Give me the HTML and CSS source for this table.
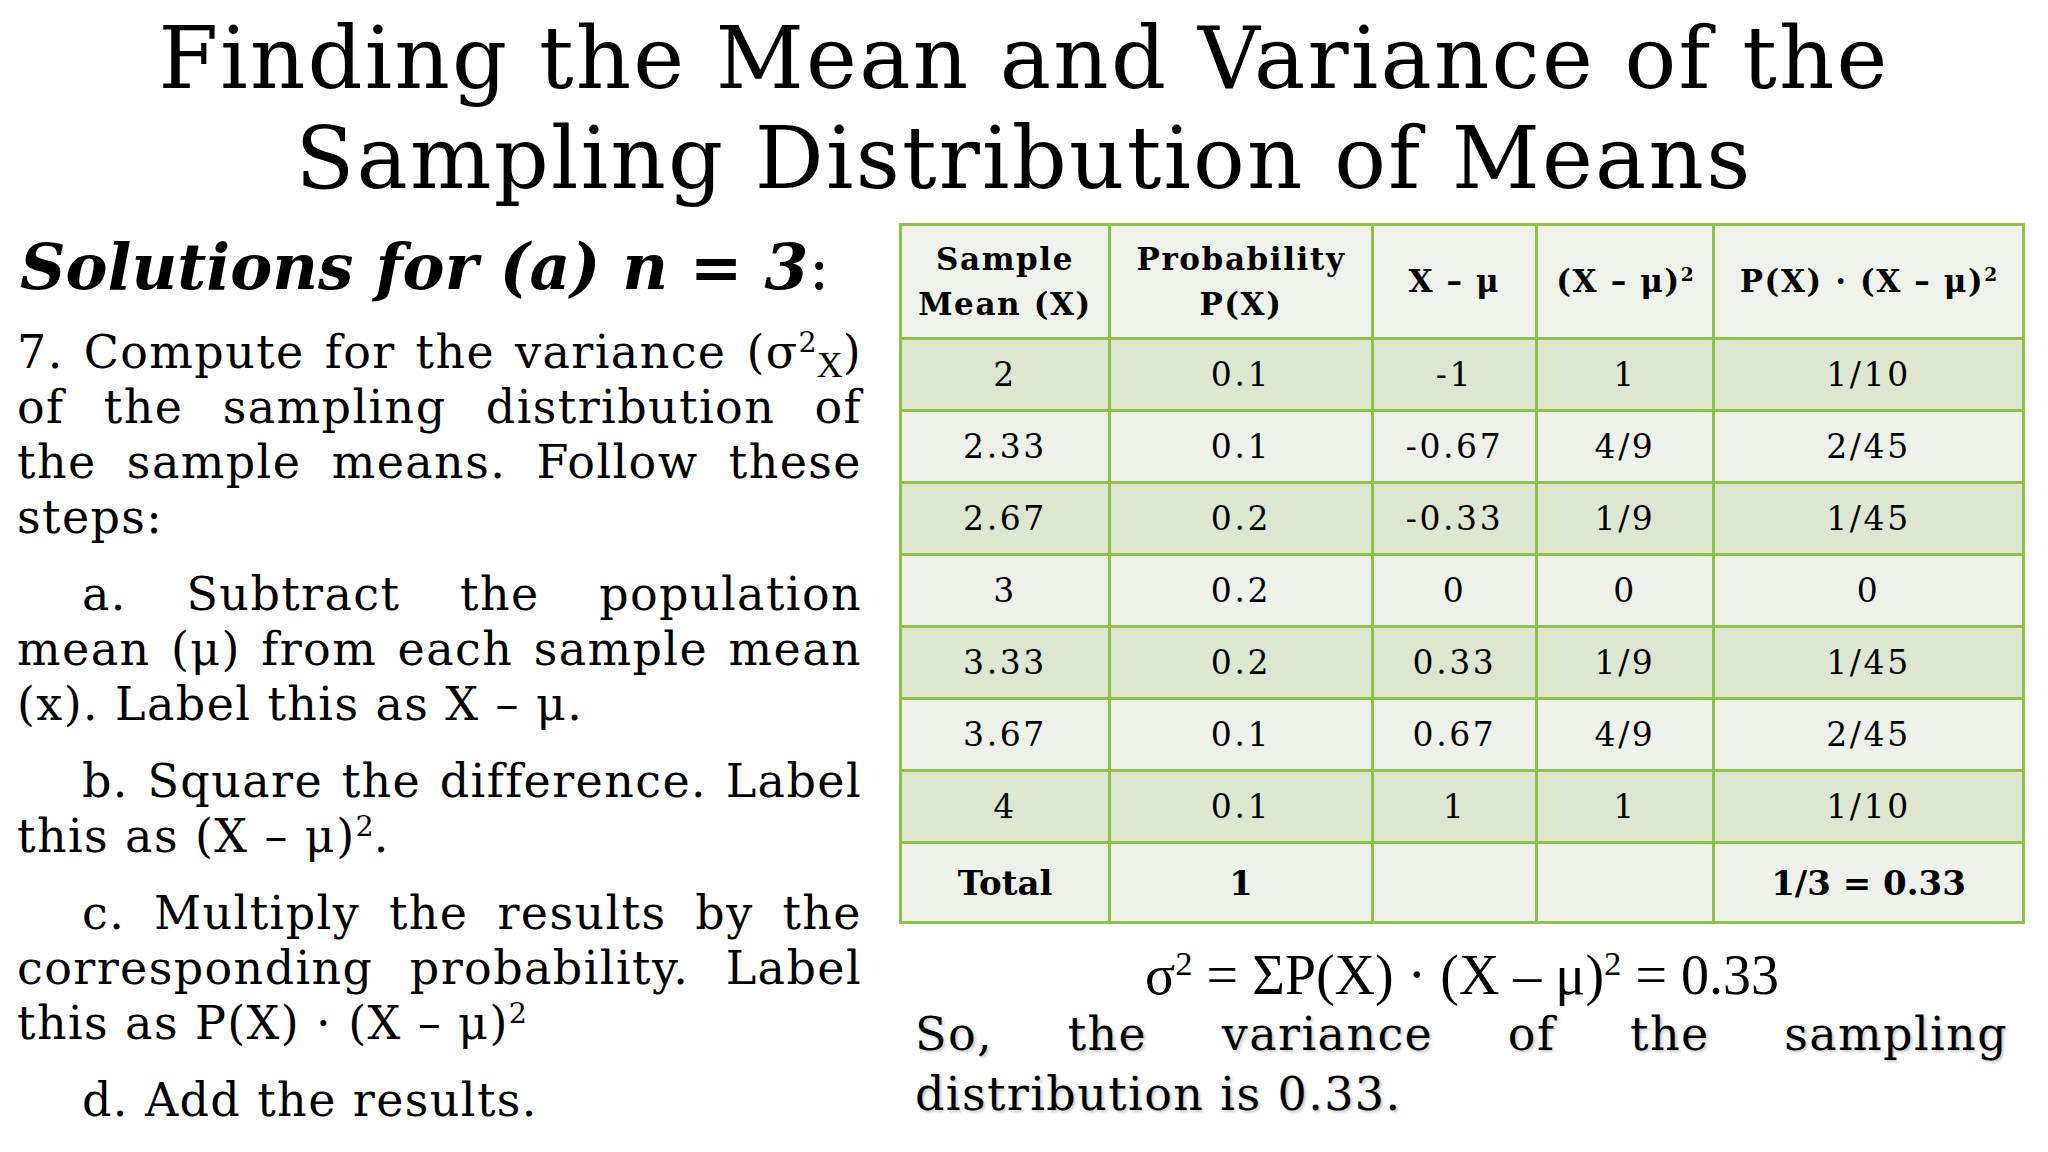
FILE: index.html
```html
<!DOCTYPE html>
<html lang="en">
<head>
<meta charset="utf-8">
<title>Finding the Mean and Variance of the Sampling Distribution of Means</title>
<link rel="stylesheet" href="styles.css">
</head>
<body>
<div class="slide">
  <h1 class="title">Finding the Mean and Variance of the<br>Sampling Distribution of Means</h1>
  <div class="columns">
    <div class="left">
      <h2 class="subhead"><span class="bi">Solutions for (a) n = 3</span>:</h2>
      <p class="para">7. Compute for the variance (σ<sup class="sup">2</sup><sub class="sub">X</sub>) of the sampling distribution of the sample means. Follow these steps:</p>
      <p class="para step">a. Subtract the population mean (μ) from each sample mean (x). Label this as X – μ.</p>
      <p class="para step">b. Square the difference. Label this as (X – μ)<sup class="sup">2</sup>.</p>
      <p class="para step">c. Multiply the results by the corresponding probability. Label this as P(X) · (X – μ)<sup class="sup">2</sup></p>
      <p class="para step">d. Add the results.</p>
    </div>
    <div class="right">
      <table class="grid">
        <colgroup>
          <col class="c1"><col class="c2"><col class="c3"><col class="c4"><col class="c5">
        </colgroup>
        <thead>
          <tr class="head">
            <th>Sample<br>Mean (X)</th>
            <th>Probability<br>P(X)</th>
            <th>X – μ</th>
            <th>(X – μ)<sup class="hsup">2</sup></th>
            <th>P(X) · (X – μ)<sup class="hsup">2</sup></th>
          </tr>
        </thead>
        <tbody>
          <tr class="row dark"><td>2</td><td>0.1</td><td>-1</td><td>1</td><td>1/10</td></tr>
          <tr class="row light"><td>2.33</td><td>0.1</td><td>-0.67</td><td>4/9</td><td>2/45</td></tr>
          <tr class="row dark"><td>2.67</td><td>0.2</td><td>-0.33</td><td>1/9</td><td>1/45</td></tr>
          <tr class="row light"><td>3</td><td>0.2</td><td>0</td><td>0</td><td>0</td></tr>
          <tr class="row dark"><td>3.33</td><td>0.2</td><td>0.33</td><td>1/9</td><td>1/45</td></tr>
          <tr class="row light"><td>3.67</td><td>0.1</td><td>0.67</td><td>4/9</td><td>2/45</td></tr>
          <tr class="row dark"><td>4</td><td>0.1</td><td>1</td><td>1</td><td>1/10</td></tr>
          <tr class="total"><td>Total</td><td>1</td><td></td><td></td><td>1/3 = 0.33</td></tr>
        </tbody>
      </table>
      <div class="equation">σ<sup class="esup">2</sup> = ΣP(X) · (X – μ)<sup class="esup">2</sup> = 0.33</div>
      <p class="conclusion">So, the variance of the sampling distribution is 0.33.</p>
    </div>
  </div>
</div>
</body>
</html>
```

FILE: styles.css
```css
html, body {
  margin: 0;
  padding: 0;
  background: #ffffff;
}

body {
  width: 2048px;
  height: 1152px;
  overflow: hidden;
  color: #000;
  font-family: "DejaVu Serif", "Liberation Serif", serif;
}

.slide {
  width: 2048px;
  height: 1152px;
  display: flex;
  flex-direction: column;
}

.title {
  margin: 8px 0 0 0;
  font-weight: normal;
  font-size: 86px;
  line-height: 100px;
  letter-spacing: 2.2px;
  text-align: center;
}

.columns {
  display: flex;
  gap: 37px;
  padding: 15px 26px 0 17px;
}

.left {
  width: 845px;
  flex: none;
  padding-top: 9px;
}

.subhead {
  margin: 0;
  padding-left: 3px;
  font-size: 63px;
  line-height: 70px;
  font-weight: normal;
}

.bi {
  font-weight: bold;
  font-style: italic;
}

.para {
  margin: 22px 0 0 0;
  font-size: 46px;
  line-height: 55px;
  letter-spacing: 1.4px;
  text-align: justify;
}

.step {
  text-indent: 65px;
}

.sup {
  font-size: 0.62em;
  vertical-align: 0.55em;
  line-height: 0;
  letter-spacing: 0;
}

.sub {
  font-family: "Liberation Serif", serif;
  font-size: 0.78em;
  vertical-align: -0.25em;
  line-height: 0;
  letter-spacing: 0;
}

.right {
  flex: 1;
  display: flex;
  flex-direction: column;
}

.grid {
  width: 1123px;
  border-collapse: collapse;
  table-layout: fixed;
  border: 3px solid #8fc04a;
}

.c1 { width: 209px; }
.c2 { width: 263px; }
.c3 { width: 164px; }
.c4 { width: 177px; }
.c5 { width: 310px; }

.grid th,
.grid td {
  border: 3px solid #8fc04a;
  padding: 0;
  text-align: center;
  vertical-align: middle;
}

.head {
  height: 114px;
  background: #eef2ea;
}

.head th {
  font-size: 31px;
  line-height: 45px;
  letter-spacing: 1.6px;
  font-weight: bold;
}

.hsup {
  font-size: 0.6em;
  vertical-align: 0.6em;
  line-height: 0;
  letter-spacing: 0;
}

.row {
  height: 72px;
}

.row td {
  font-size: 33px;
  letter-spacing: 2.6px;
}

.dark {
  background: #dde6d0;
}

.light {
  background: #edf1ea;
}

.total {
  height: 80px;
  background: #edf1ea;
}

.total td {
  font-size: 34px;
  font-weight: bold;
}

.equation {
  margin-top: 22px;
  font-family: "Liberation Serif", "Times New Roman", serif;
  font-size: 56px;
  line-height: 58px;
  text-align: center;
}

.esup {
  font-size: 0.62em;
  vertical-align: 0.55em;
  line-height: 0;
}

.conclusion {
  margin: 0;
  padding: 0 17px 0 16px;
  font-size: 46px;
  line-height: 60px;
  letter-spacing: 1.4px;
  text-align: justify;
  text-shadow: 2px 2px 3px rgba(0, 0, 0, 0.22);
}
```
